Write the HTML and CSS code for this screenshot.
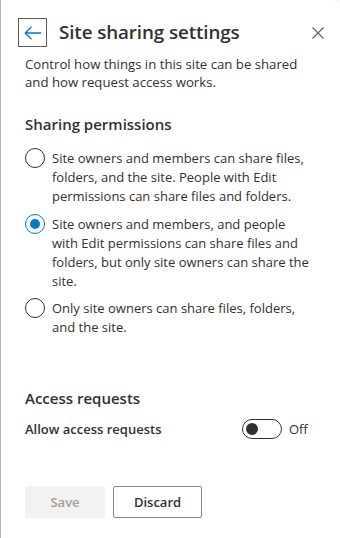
FILE: index.html
```html
<!DOCTYPE html>
<html lang="en">
<head>
<meta charset="utf-8">
<title>Site sharing settings</title>
<link rel="stylesheet" href="styles.css">
</head>
<body>
<div class="panel">
  <div class="header">
    <button class="back" aria-label="Back">
      <svg width="18" height="14" viewBox="0 0 18 14"><path d="M1 7h16M7.5 0.8L1.2 7l6.3 6.2" fill="none" stroke="#0078d4" stroke-width="1.3"/></svg>
    </button>
    <h1 class="title">Site sharing settings</h1>
    <button class="close" aria-label="Close">
      <svg width="12" height="12" viewBox="0 0 12 12"><path d="M0.5 0.5l11 11M11.5 0.5l-11 11" stroke="#605e5c" stroke-width="1.1"/></svg>
    </button>
  </div>
  <p class="desc">Control how things in this site can be shared and how request access works.</p>

  <h2 class="section">Sharing permissions</h2>
  <div class="options">
    <label class="option"><span class="radio"></span><span class="otext">Site owners and members can share files, folders, and the site. People with Edit permissions can share files and folders.</span></label>
    <label class="option"><span class="radio checked"></span><span class="otext">Site owners and members, and people with Edit permissions can share files and folders, but only site owners can share the site.</span></label>
    <label class="option"><span class="radio"></span><span class="otext">Only site owners can share files, folders, and the site.</span></label>
  </div>

  <h2 class="section access">Access requests</h2>
  <div class="row">
    <span class="rowlabel">Allow access requests</span>
    <span class="toggle"><span class="knob"></span></span>
    <span class="off">Off</span>
  </div>

  <div class="actions">
    <button class="btn save" disabled>Save</button>
    <button class="btn discard">Discard</button>
  </div>
</div>
</body>
</html>
```

FILE: styles.css
```css
html, body {
  margin: 0;
  padding: 0;
  background: #ffffff;
}
body {
  font-family: "Segoe UI", "Open Sans", "Noto Sans", sans-serif;
  color: #323130;
  width: 340px;
  height: 538px;
  overflow: hidden;
}
.panel {
  box-sizing: border-box;
  height: 538px;
  border-left: 1px solid #b4b4b4;
  border-top-right-radius: 8px;
  box-shadow: 0 0 3px rgba(0,0,0,0.12);
  padding: 18px 0 0 24px;
}
.header {
  display: flex;
  align-items: center;
  margin-left: -7px;
}
.back {
  width: 29px;
  height: 29px;
  box-sizing: border-box;
  border: 1.5px solid #5a5a5a;
  background: #fff;
  padding: 0;
  display: flex;
  align-items: center;
  justify-content: center;
}
.title {
  margin: 0 0 0 12px;
  font-size: 18.8px;
  font-weight: 600;
  letter-spacing: -0.1px;
  flex: 1;
  line-height: 29px;
}
.close {
  border: 0;
  background: none;
  padding: 0;
  width: 12px;
  height: 12px;
  margin-right: 16px;
  display: flex;
}
.desc {
  margin: 8px 0 0 0;
  font-size: 13.2px;
  line-height: 18px;
  width: 290px;
}
.section {
  margin: 22px 0 0 0;
  font-size: 15px;
  font-weight: 600;
  line-height: 22px;
}
.options {
  display: flex;
  flex-direction: column;
  gap: 8.5px;
  margin-top: 14px;
}
.option {
  display: flex;
  align-items: flex-start;
  gap: 7px;
}
.radio {
  flex: none;
  width: 20px;
  height: 20px;
  box-sizing: border-box;
  border: 1px solid #323130;
  border-radius: 50%;
  margin-top: -1px;
  position: relative;
}
.radio.checked {
  border-color: #0078d4;
}
.radio.checked::after {
  content: "";
  position: absolute;
  left: 4px;
  top: 4px;
  width: 10px;
  height: 10px;
  border-radius: 50%;
  background: #0078d4;
}
.otext {
  font-size: 13px;
  line-height: 19px;
  width: 262px;
}
.access {
  margin-top: 50px;
}
.row {
  display: flex;
  align-items: center;
  margin-top: 10px;
  font-size: 13px;
}
.rowlabel {
  font-weight: 600;
  width: 217px;
}
.toggle {
  width: 40px;
  height: 20px;
  box-sizing: border-box;
  border: 1px solid #323130;
  border-radius: 10px;
  display: flex;
  align-items: center;
  padding-left: 3px;
}
.knob {
  width: 12px;
  height: 12px;
  border-radius: 50%;
  background: #323130;
}
.off {
  margin-left: 7px;
}
.actions {
  display: flex;
  gap: 8px;
  margin-top: 47px;
}
.btn {
  height: 32px;
  box-sizing: border-box;
  font-family: inherit;
  font-size: 13px;
  font-weight: 600;
  border-radius: 2px;
  padding: 0;
}
.save {
  width: 80px;
  background: #f3f2f1;
  color: #a19f9d;
  border: 1px solid #f3f2f1;
}
.discard {
  width: 89px;
  background: #fff;
  color: #323130;
  border: 1px solid #8a8886;
}
```
